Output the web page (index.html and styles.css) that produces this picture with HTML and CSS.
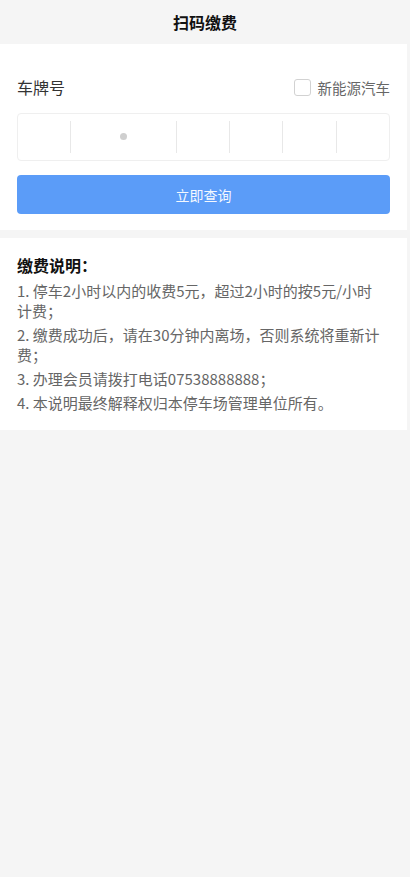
FILE: index.html
```html
<!DOCTYPE html>
<html lang="zh-CN">
<head>
  <meta charset="UTF-8">
  <title>扫码缴费</title>
  <link rel="stylesheet" href="styles.css">
</head>
<body>

  <header class="top-bar">
    <h1 class="top-title">扫码缴费</h1>
  </header>

  <section class="card plate-card">
    <div class="plate-head">
      <span class="plate-label">车牌号</span>
      <label class="energy">
        <span class="energy-box"></span>
        新能源汽车
      </label>
    </div>

    <div class="plate-input">
      <div class="plate-cell"></div>
      <div class="plate-cell"></div>
      <div class="plate-cell dot-cell"></div>
      <div class="plate-cell"></div>
      <div class="plate-cell"></div>
      <div class="plate-cell"></div>
      <div class="plate-cell"></div>
    </div>

    <button class="query-btn">立即查询</button>
  </section>

  <section class="card notice-card">
    <h2 class="notice-title">缴费说明：</h2>
    <ol class="notice-list">
      <li>1. 停车2小时以内的收费5元，超过2小时的按5元/小时计费；</li>
      <li>2. 缴费成功后，请在30分钟内离场，否则系统将重新计费；</li>
      <li>3. 办理会员请拨打电话07538888888；</li>
      <li>4. 本说明最终解释权归本停车场管理单位所有。</li>
    </ol>
  </section>

</body>
</html>
```

FILE: styles.css
```css
body {
  margin: 0;
  min-height: 877px;
  background: #f5f5f5;
  font-family: "Noto Sans CJK SC", "Noto Sans", sans-serif;
  color: #333;
}

/* Top bar */
.top-bar {
  height: 44px;
  display: flex;
  align-items: center;
  justify-content: center;
  background: #f5f5f5;
}

.top-title {
  margin: 0;
  font-size: 16px;
  font-weight: bold;
  color: #111;
  line-height: 1;
}

/* Cards */
.card {
  background: #fff;
  margin-right: 3px;
}

.plate-card {
  padding: 31px 17px 16px;
}

.plate-head {
  display: flex;
  justify-content: space-between;
  align-items: center;
  height: 24px;
}

.plate-label {
  font-size: 16px;
  color: #333;
}

.energy {
  display: flex;
  align-items: center;
  font-size: 14.5px;
  color: #666;
}

.energy-box {
  width: 15px;
  height: 15px;
  border: 1px solid #d2d2d2;
  border-radius: 3px;
  margin-right: 7px;
}

/* Plate number boxes */
.plate-input {
  display: flex;
  height: 46px;
  margin-top: 14px;
  border: 1px solid #efefef;
  border-radius: 4px;
}

.plate-cell {
  flex: 1;
  margin: 7px 0;
  position: relative;
}

.plate-cell + .plate-cell {
  border-left: 1px solid #e8e8e8;
}

.plate-cell.dot-cell {
  border-left: none;
}

.dot-cell::before {
  content: "";
  position: absolute;
  left: -4px;
  top: 50%;
  width: 7px;
  height: 7px;
  margin-top: -4px;
  border-radius: 50%;
  background: #cfcfcf;
}

.query-btn {
  display: block;
  width: 100%;
  height: 39px;
  margin-top: 14px;
  border: none;
  border-radius: 4px;
  background: #5b9cf8;
  color: #f4f8ff;
  font-family: inherit;
  font-size: 14px;
}

/* Notice */
.notice-card {
  margin-top: 8px;
  padding: 15px 26px 17px 17px;
}

.notice-title {
  margin: 0;
  font-size: 16px;
  font-weight: bold;
  color: #111;
  line-height: 24px;
}

.notice-list {
  list-style: none;
  margin: 4px 0 0;
  padding: 0;
}

.notice-list li {
  font-size: 15px;
  line-height: 20px;
  color: #666;
  margin-bottom: 4px;
}

.notice-list li:last-child {
  margin-bottom: 0;
}
```
